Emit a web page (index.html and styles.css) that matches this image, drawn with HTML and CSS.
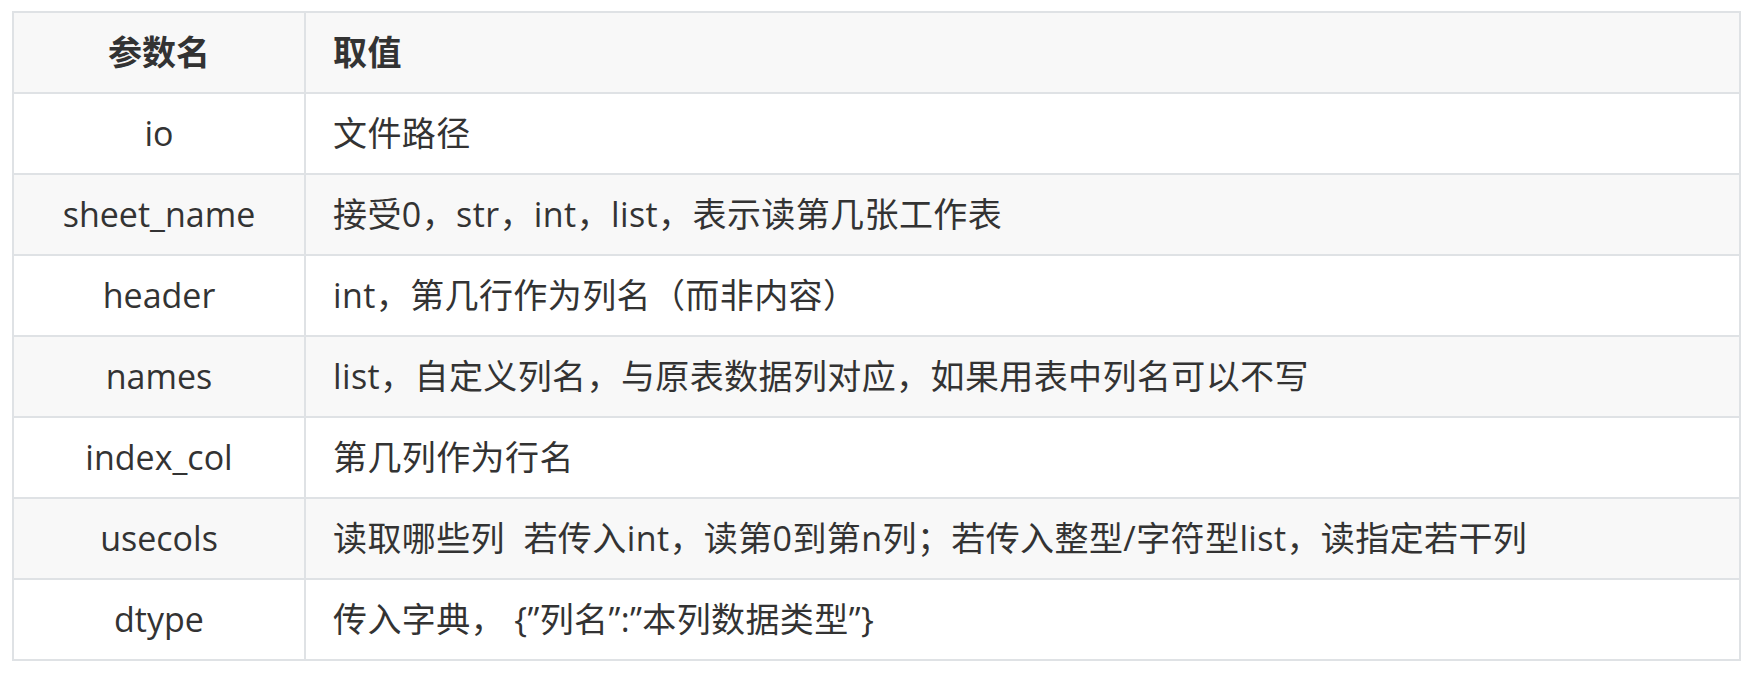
FILE: index.html
```html
<!DOCTYPE html>
<html lang="zh-CN">
<head>
<meta charset="utf-8">
<title>read_excel 参数</title>
<link rel="stylesheet" href="styles.css">
</head>
<body>
<table class="params">
  <colgroup>
    <col class="col-name">
    <col class="col-value">
  </colgroup>
  <thead>
    <tr>
      <th class="name">参数名</th>
      <th class="value">取值</th>
    </tr>
  </thead>
  <tbody>
    <tr><td class="name">io</td><td class="value">文件路径</td></tr>
    <tr><td class="name">sheet_name</td><td class="value">接受0，str，int，list，表示读第几张工作表</td></tr>
    <tr><td class="name">header</td><td class="value">int，第几行作为列名（而非内容）</td></tr>
    <tr><td class="name">names</td><td class="value">list，自定义列名，与原表数据列对应，如果用表中列名可以不写</td></tr>
    <tr><td class="name">index_col</td><td class="value">第几列作为行名</td></tr>
    <tr><td class="name">usecols</td><td class="value">读取哪些列&nbsp; 若传入int，读第0到第n列；若传入整型/字符型list，读指定若干列</td></tr>
    <tr><td class="name">dtype</td><td class="value">传入字典， {”列名”:”本列数据类型”}</td></tr>
  </tbody>
</table>
</body>
</html>
```

FILE: styles.css
```css
html, body {
  margin: 0;
  padding: 0;
  background: #ffffff;
}

body {
  padding: 11px 0 0 12px;
  font-family: "Open Sans", "Noto Sans CJK SC", sans-serif;
  color: #333333;
}

.params {
  border-collapse: collapse;
  table-layout: fixed;
  width: 1729px;
  font-size: 34px;
}

.col-name {
  width: 292px;
}

.params th,
.params td {
  border: 2px solid #dfe2e5;
  padding: 12px 27px;
  height: 55px;
  line-height: 55px;
  white-space: nowrap;
  box-sizing: content-box;
}

.params th {
  font-weight: 700;
}

.params .name {
  text-align: center;
}

.params .value {
  text-align: left;
  letter-spacing: 0.4px;
}

.params thead tr,
.params tbody tr:nth-child(2n) {
  background: #f8f8f8;
}

.params tbody tr:nth-child(2n+1) {
  background: #ffffff;
}
```
